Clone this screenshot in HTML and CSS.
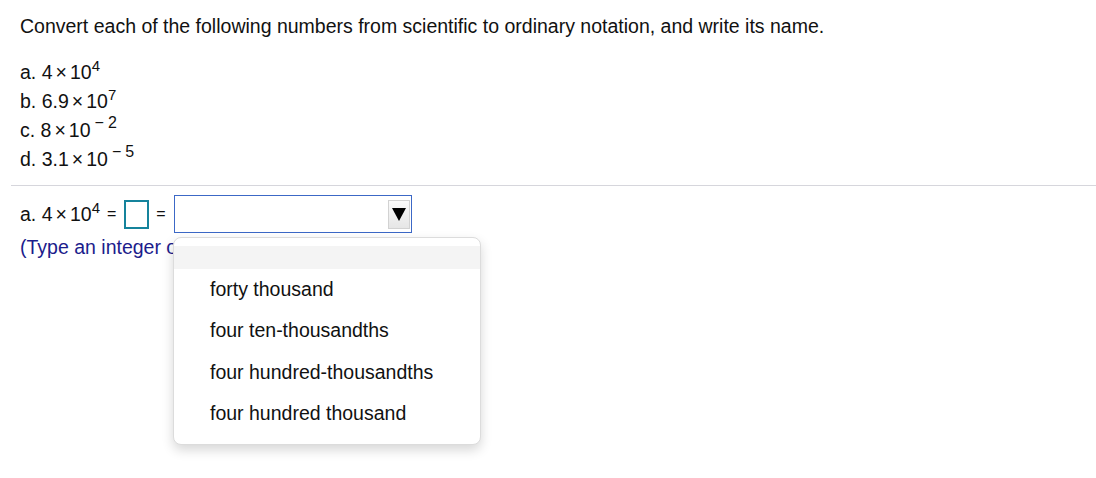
FILE: index.html
```html
<!DOCTYPE html>
<html lang="en">
  <head>
    <meta charset="UTF-8" />
    <title>Scientific notation</title>
    <link rel="stylesheet" href="styles.css">
  </head>
  <body>
    <div class="question">
      <p class="prompt">Convert each of the following numbers from scientific to ordinary notation, and write its name.</p>
      <ul class="items">
        <li>a. 4<span class="times">×</span>10<sup>4</sup></li>
        <li>b. 6.9<span class="times">×</span>10<sup>7</sup></li>
        <li>c. 8<span class="times">×</span>10<sup class="neg"><span class="minus">−</span>2</sup></li>
        <li>d. 3.1<span class="times">×</span>10<sup class="neg"><span class="minus">−</span>5</sup></li>
      </ul>
    </div>
    <div class="divider"></div>
    <div class="answer">
      <div class="row">
        <span>a. 4<span class="times">×</span>10<sup>4</sup></span>
        <span class="eq">=</span>
        <span class="box"></span>
        <span class="eq">=</span>
        <span class="select"><span class="arrow"></span></span>
      </div>
      <p class="hint">(Type an integer or decimal.)</p>
      <!-- opened dropdown list -->
      <div class="menu">
        <div class="opt blank"></div>
        <div class="opt">forty thousand</div>
        <div class="opt">four ten-thousandths</div>
        <div class="opt">four hundred-thousandths</div>
        <div class="opt">four hundred thousand</div>
      </div>
    </div>
  </body>
</html>
```

FILE: styles.css
```css
* {
  padding: 0;
  margin: 0;
  box-sizing: border-box;
}
html,
body {
  min-height: 478px;
}
body {
  background: white;
  font-family: "Liberation Sans", Arial, sans-serif;
  font-size: 19.5px;
  color: #111;
}
.question {
  padding: 13px 20px 0;
}
.prompt {
  line-height: 26px;
}
.items {
  list-style: none;
  margin-top: 19px;
}
.items li {
  line-height: 29px;
}
.times {
  margin: 0 3px;
}
sup {
  font-size: 15px;
  vertical-align: 8px;
  line-height: 0;
}
sup.neg {
  vertical-align: 9px;
  font-size: 16px;
  margin-left: 4px;
}
.minus {
  margin-right: 4px;
}
.divider {
  height: 1px;
  background: #d6d6dc;
  margin: 11px 0 0 11px;
}
.answer {
  position: relative;
  padding: 9px 20px 0;
}
.row {
  display: flex;
  align-items: center;
  height: 38px;
}
.eq {
  font-size: 16px;
  margin: 0 7px;
}
.box {
  width: 25px;
  height: 29px;
  margin-left: 1px;
  border: 2px solid #15839c;
}
.select {
  width: 238px;
  height: 38px;
  margin-left: 1px;
  border: 1px solid #3c68c6;
  display: flex;
  justify-content: flex-end;
  align-items: center;
  padding-right: 1px;
}
.arrow {
  width: 22px;
  height: 29px;
  background: linear-gradient(#fafafa, #e6e6e6);
  border: 1px solid #d2d2d2;
  position: relative;
}
.arrow::after {
  content: "";
  position: absolute;
  left: 3px;
  top: 7px;
  border-left: 7px solid transparent;
  border-right: 7px solid transparent;
  border-top: 13px solid #000;
}
.hint {
  color: #1c1c8c;
  line-height: 24px;
  margin-top: 2px;
}
.menu {
  position: absolute;
  left: 173px;
  top: 51px;
  width: 308px;
  background: white;
  border: 1px solid #dcdcdc;
  border-radius: 8px;
  box-shadow: 0 5px 12px rgba(0, 0, 0, 0.16);
  padding: 8px 0 9px;
}
.opt {
  height: 41.4px;
  line-height: 41.4px;
  padding-left: 36px;
  color: #111;
}
.opt.blank {
  height: 23px;
  background: #f4f4f4;
}
```
